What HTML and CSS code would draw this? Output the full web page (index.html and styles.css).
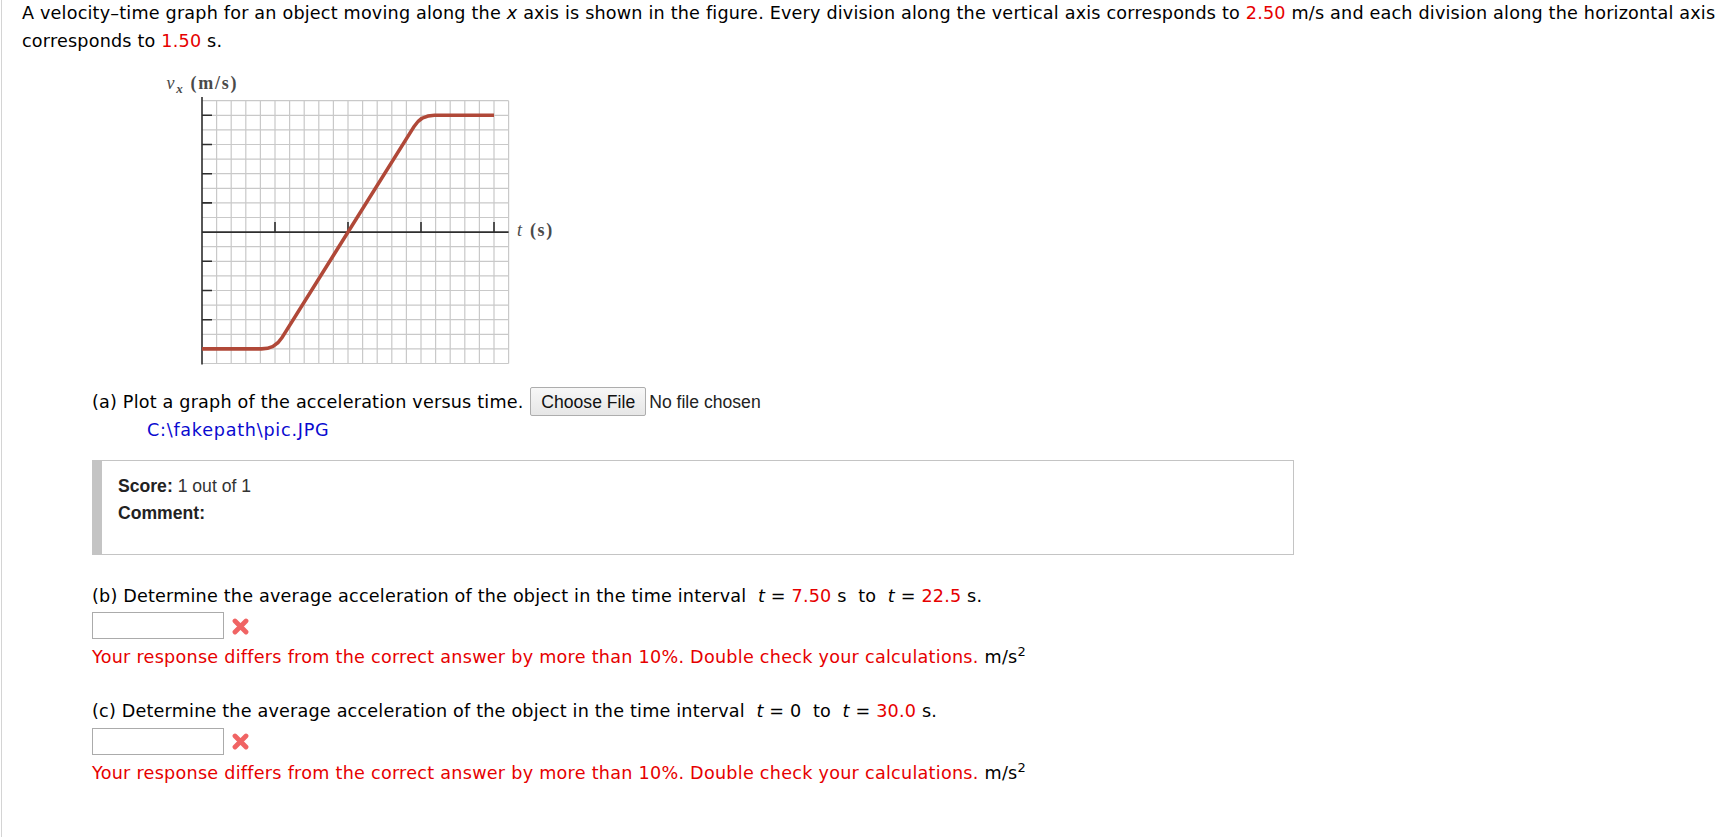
FILE: index.html
```html
<!DOCTYPE html>
<html lang="en">
<head>
<meta charset="utf-8">
<title>Velocity-time graph</title>
<link rel="stylesheet" href="styles.css">
</head>
<body>
<div class="page">
  <p class="intro">A velocity–time graph for an object moving along the <i>x</i> axis is shown in the figure. Every division along the vertical axis corresponds to <span class="red">2.50</span> m/s and each division along the horizontal axis corresponds to <span class="red">1.50</span> s.</p>

  <div class="figure">
    <svg class="graph" width="420" height="324" viewBox="0 0 420 324" xmlns="http://www.w3.org/2000/svg">
      <text class="lbl" x="16.5" y="34"><tspan class="it">v</tspan><tspan class="sub" dy="4">x</tspan><tspan class="up" dy="-4"> (m/s)</tspan></text>
      <path class="grid" d="M66.6 45.7V308.5M81.2 45.7V308.5M95.8 45.7V308.5M110.4 45.7V308.5M125 45.7V308.5M139.6 45.7V308.5M154.2 45.7V308.5M168.8 45.7V308.5M183.4 45.7V308.5M198 45.7V308.5M212.6 45.7V308.5M227.2 45.7V308.5M241.8 45.7V308.5M256.4 45.7V308.5M271 45.7V308.5M285.6 45.7V308.5M300.2 45.7V308.5M314.8 45.7V308.5M329.4 45.7V308.5M344 45.7V308.5M358.6 45.7V308.5M52 45.7H358.6M52 60.3H358.6M52 74.9H358.6M52 89.5H358.6M52 104.1H358.6M52 118.7H358.6M52 133.3H358.6M52 147.9H358.6M52 162.5H358.6M52 191.7H358.6M52 206.3H358.6M52 220.9H358.6M52 235.5H358.6M52 250.1H358.6M52 264.7H358.6M52 279.3H358.6M52 293.9H358.6M52 308.5H358.6"/>
      <path class="axis" d="M52 42V309.5M52 177.1H358.6"/>
      <path class="tick" d="M52 60.3H62M52 89.5H62M52 118.7H62M52 147.9H62M52 206.3H62M52 235.5H62M52 264.7H62M52 293.9H62M125 177.1V167M198 177.1V167M271 177.1V167M344 177.1V167"/>
      <path class="curve" d="M52 293.9H111.5Q125 293.9 132 282.6L264 71.6Q271 60.3 284.5 60.3H344"/>
      <text class="lbl" x="367" y="181"><tspan class="it">t</tspan><tspan class="up"> (s)</tspan></text>
    </svg>
  </div>

  <div class="part">
    <div class="qline">(a) Plot a graph of the acceleration versus time. <span class="file"><span class="choose">Choose File</span><span class="nofile">No file chosen</span></span></div>
    <div class="upload">C:\fakepath\pic.JPG</div>

    <div class="score">
      <div class="srow"><b>Score:</b> 1 out of 1</div>
      <div class="srow"><b>Comment:</b></div>
    </div>

    <div class="qline q-b">(b) Determine the average acceleration of the object in the time interval&nbsp; <i>t</i> = <span class="red">7.50</span> s&nbsp; to&nbsp; <i>t</i> = <span class="red">22.5</span> s.</div>
    <div class="answer">
      <span class="box"></span>
      <svg class="wrong" width="19" height="17" viewBox="0 0 19 17" xmlns="http://www.w3.org/2000/svg"><path d="M4 3L15 14M15 3L4 14"/></svg>
    </div>
    <div class="msg"><span class="red">Your response differs from the correct answer by more than 10%. Double check your calculations.</span> m/s<sup>2</sup></div>

    <div class="qline q-c">(c) Determine the average acceleration of the object in the time interval&nbsp; <i>t</i> = 0&nbsp; to&nbsp; <i>t</i> = <span class="red">30.0</span> s.</div>
    <div class="answer">
      <span class="box"></span>
      <svg class="wrong" width="19" height="17" viewBox="0 0 19 17" xmlns="http://www.w3.org/2000/svg"><path d="M4 3L15 14M15 3L4 14"/></svg>
    </div>
    <div class="msg"><span class="red">Your response differs from the correct answer by more than 10%. Double check your calculations.</span> m/s<sup>2</sup></div>
  </div>
</div>
</body>
</html>
```

FILE: styles.css
```css
html, body {
  margin: 0;
  padding: 0;
  background: #ffffff;
}

body {
  font-family: "DejaVu Sans", Verdana, sans-serif;
  font-size: 17.6px;
  line-height: 27.6px;
  letter-spacing: 0.19px;
  color: #000000;
}

.page {
  margin-left: 1px;
  border-left: 1px solid #d4d4d4;
  padding: 0 4px 0 20px;
  min-height: 100vh;
  box-sizing: border-box;
}

.intro {
  margin: 0;
}

.red {
  color: #e60000;
}

.figure {
  margin-left: 128px;
  height: 324px;
}

.graph {
  display: block;
}

.lbl {
  font-family: "Liberation Serif", "Times New Roman", serif;
  font-size: 18px;
  font-weight: bold;
  fill: #4a4a4a;
  letter-spacing: 1.7px;
}

.lbl .it {
  font-style: italic;
  font-weight: normal;
}

.lbl .sub {
  font-style: italic;
  font-size: 13px;
}

.grid {
  fill: none;
  stroke: #c9c9c9;
  stroke-width: 1.2;
}

.axis {
  fill: none;
  stroke: #2e2e2e;
  stroke-width: 1.6;
}

.tick {
  fill: none;
  stroke: #2e2e2e;
  stroke-width: 1.6;
}

.curve {
  fill: none;
  stroke: #b04838;
  stroke-width: 3.6;
}

.part {
  margin-left: 70px;
  margin-top: 9px;
}

.qline {
  white-space: nowrap;
}

.file {
  display: inline-flex;
  align-items: center;
  vertical-align: middle;
  margin-left: 1px;
  font-family: "Liberation Sans", Arial, sans-serif;
  font-size: 17.6px;
  line-height: 20px;
  letter-spacing: 0;
  position: relative;
  top: -1px;
}

.choose {
  display: inline-block;
  padding: 4px 10px 3px;
  border: 1px solid #adadad;
  border-radius: 2px;
  background: linear-gradient(#f7f7f7, #e6e6e6);
  color: #111;
}

.nofile {
  margin-left: 3px;
  color: #222;
}

.upload {
  padding-left: 55px;
  letter-spacing: 0.75px;
  color: #0a0ad0;
}

.score {
  margin-top: 15px;
  width: 1202px;
  box-sizing: border-box;
  border: 1px solid #c4c4c4;
  border-left: 10px solid #c4c4c4;
  padding: 12px 16px 26px;
  font-family: "Liberation Sans", Arial, sans-serif;
  font-size: 17.6px;
  line-height: 27.5px;
  letter-spacing: 0;
  color: #333;
}

.score b {
  color: #222;
}

.q-b {
  margin-top: 28px;
}

.q-c {
  margin-top: 26px;
}

.answer {
  margin-top: 2px;
  display: flex;
  align-items: center;
  height: 27px;
}

.box {
  width: 132px;
  height: 27px;
  box-sizing: border-box;
  border: 1px solid #ababab;
  background: #fff;
}

.wrong {
  margin-left: 7px;
  margin-top: 1px;
}

.wrong path {
  fill: none;
  stroke: #f06464;
  stroke-width: 4.8;
  stroke-linecap: round;
}

.msg {
  margin-top: 5px;
  letter-spacing: 0.26px;
}

.msg sup {
  font-size: 13px;
  line-height: 0;
  vertical-align: 7px;
}
```
